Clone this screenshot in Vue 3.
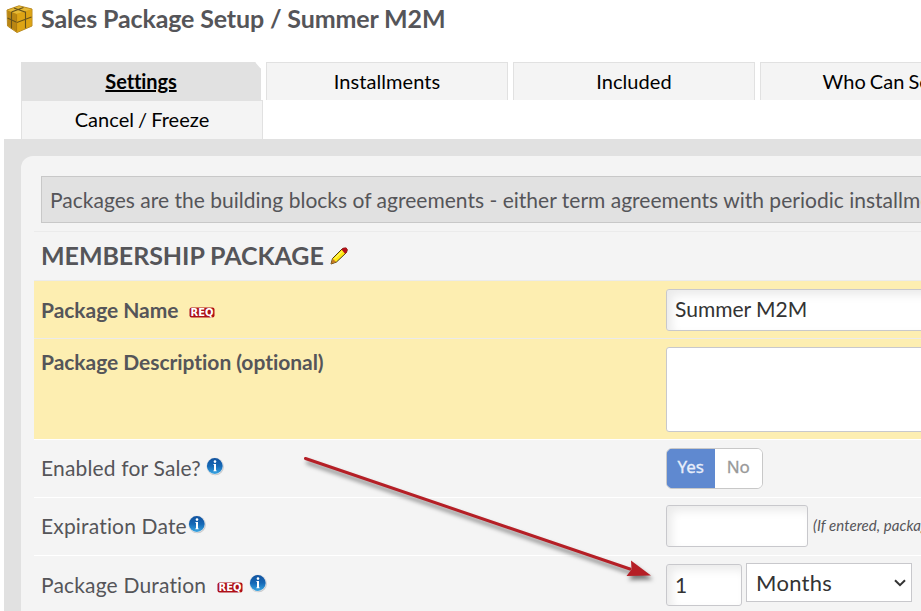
<template>
  <div class="page">
    <header class="title-bar">
      <svg class="package-icon" width="28" height="28" viewBox="0 0 28 28">
        <path d="M1 5 13 .8 26 4v17L11 27.500 1.500 21z" fill="#d5a019" stroke="#b88a26" stroke-linejoin="round" />
        <path d="M1.500 5.500 13 1.300 25.500 4.500 10.500 9z" fill="#e5b936" />
        <path d="M10.500 9 25.500 4.500V20.500L11 27z" fill="#dda414" />
        <path d="M1.500 5.500 10.500 9 11 27 2 20.500z" fill="#b98613" />
        <path d="m5.500 7 12-4.500M8 3l11.500 4.200v16M5.500 7v16.500M1.500 13l9.500 4.500 14.500-5.500" fill="none" stroke="#66521a" stroke-width="1.100" />
        <path d="M10.600 9.500V26" stroke="#a87710" stroke-width=".8" />
      </svg>
      <h1>Sales Package Setup / Summer M2M</h1>
    </header>

    <nav class="tabs">
      <a v-for="tab in tabs" :key="tab" class="tab" :class="{ active: tab === activeTab }" @click="activeTab = tab">
        <span>{{ tab }}</span>
      </a>
    </nav>

    <main class="panel">
      <div class="panel-inner">
        <p class="notice">Packages are the building blocks of agreements - either term agreements with periodic installments</p>

        <div class="section-head">
          <h2>MEMBERSHIP PACKAGE</h2>
          <svg class="pencil" width="18" height="18" viewBox="0 0 18 18">
            <path d="M1 17 2.500 11.500 12.500 1.500 16 1l1.200 1.800-.7 2.700L6.500 15z" fill="#ffe911" stroke="#4c3b13" stroke-width="1" />
            <path d="m11.500 2.500 2-1.700L16.500.7l1 2-.8 2.800-1.700 1.300z" fill="#b4101c" />
            <path d="M1 17 2.600 11.800 6.200 15z" fill="#c47a25" />
            <path d="m5 11.500 7-7" stroke="#fffa9a" stroke-width="1" />
          </svg>
        </div>

        <div v-for="row in rows" :key="row.id" class="row" :class="[row.id, { highlight: row.highlight }]">
          <label class="label">
            <span class="label-text">{{ row.label }}</span>
            <svg v-if="row.required" class="req" width="26" height="11" viewBox="0 0 26 11">
              <rect x=".5" y=".5" width="25" height="10" rx="2" fill="#ad1018" />
              <text x="13" y="9" text-anchor="middle" textLength="23" lengthAdjust="spacingAndGlyphs">REQ</text>
            </svg>
            <svg v-if="row.info" class="info" width="18" height="19" viewBox="0 0 18 19">
              <defs>
                <linearGradient :id="'ball-' + row.id" x1="0" y1="0" x2="0" y2="1">
                  <stop offset="0" stop-color="#12539f" />
                  <stop offset=".5" stop-color="#1568b6" />
                  <stop offset="1" stop-color="#38a5e2" />
                </linearGradient>
              </defs>
              <circle cx="9.300" cy="9.700" r="8.600" fill="#c9c9cb" />
              <circle cx="8.800" cy="9" r="8.500" fill="#e5e7ea" />
              <circle cx="8.800" cy="9" r="7.900" :fill="`url(#ball-${row.id})`" />
              <circle cx="9" cy="4.600" r="1.300" fill="#fff" />
              <path d="M7.300 6.900h2.700v6.500h.7v.9H7.300v-.9h.7V7.800h-.7z" fill="#fff" />
            </svg>
          </label>

          <div class="field">
            <input v-if="row.id === 'name'" v-model="name" class="text-input wide" type="text" />
            <textarea v-else-if="row.id === 'description'" v-model="description" class="area"></textarea>
            <div v-else-if="row.id === 'enabled'" class="toggle">
              <button :class="{ on: enabled }" @click="enabled = true">Yes</button>
              <button :class="{ on: !enabled }" @click="enabled = false">No</button>
            </div>
            <template v-else-if="row.id === 'expiration'">
              <input v-model="expiration" class="text-input date" type="text" />
              <em class="hint">(If entered, package will expire)</em>
            </template>
            <template v-else>
              <input v-model="duration" class="text-input count" type="text" />
              <div class="select">
                <span>{{ unit }}</span>
                <svg width="12" height="8" viewBox="0 0 12 8">
                  <path d="m1 1.200 5 5 5-5" fill="none" stroke="#333" stroke-width="2" />
                </svg>
              </div>
            </template>
          </div>
        </div>
      </div>
    </main>

    <svg class="arrow" width="370" height="150" viewBox="0 0 370 150">
      <g>
        <path d="M15.500 18.500 340 129" stroke="#b51f26" stroke-width="3" stroke-linecap="round" />
        <path d="m361 135.500-24.500.5 5-6.500-.5-9z" fill="#b51f26" />
      </g>
    </svg>
  </div>
</template>

<script setup>
import { ref } from "vue";

const tabs = ["Settings", "Installments", "Included", "Who Can Sell", "Cancel / Freeze"];
const activeTab = ref("Settings");

const rows = [
  { id: "name", label: "Package Name", required: true, highlight: true },
  { id: "description", label: "Package Description (optional)", highlight: true },
  { id: "enabled", label: "Enabled for Sale?", info: true },
  { id: "expiration", label: "Expiration Date", info: true },
  { id: "duration", label: "Package Duration", required: true, info: true },
];

const name = ref("Summer M2M");
const description = ref("");
const enabled = ref(true);
const expiration = ref("");
const duration = ref("1");
const unit = ref("Months");
</script>

<style>
body {
  background-color: #fff;
  overflow: hidden;
}
</style>

<style scoped>
.page {
  position: relative;
  box-sizing: border-box;
  width: 921px;
  height: 611px;
  overflow: hidden;
  font-family: Lato, sans-serif;
  font-size: 21px;
  font-variant-ligatures: none;
  color: #555559;
}
.page * {
  box-sizing: border-box;
}

.title-bar {
  display: flex;
  height: 62px;
  padding: 5px 0 0 6px;
}
.title-bar h1 {
  margin: 0 0 0 7px;
  font-size: 25px;
  font-weight: 700;
  line-height: 27px;
  letter-spacing: -0.14px;
  white-space: nowrap;
}

.tabs {
  display: flex;
  flex-wrap: wrap;
  gap: 0 5px;
  width: 1010px;
  height: 77px;
  padding-left: 21px;
}
.tab {
  width: 242px;
  height: 38px;
  border: 1px solid #e1e1e1;
  border-bottom: none;
  background-color: #f4f4f4;
  color: #000;
  font-size: 20px;
  line-height: 36px;
  letter-spacing: 0.06px;
  word-spacing: -1.2px;
  text-align: center;
  cursor: pointer;
}
.tab:last-child {
  height: 39px;
}
.tab.active {
  width: 240px;
  background-color: #e1e1e1;
  font-weight: 700;
  letter-spacing: -0.1px;
  text-decoration: underline;
  clip-path: polygon(0 0, 234px 0, 240px 7px, 240px 100%, 0 100%);
}

.panel {
  width: 917px;
  height: 472px;
  margin-left: 4px;
  padding: 17px 0 0 17px;
  background-color: #e1e1e1;
}
.panel-inner {
  height: 455px;
  padding: 20px 0 0 13px;
  border-top-left-radius: 12px;
  background-color: #f4f4f4;
}
.notice {
  height: 47px;
  margin: 0 0 8px 7px;
  padding-left: 8px;
  border: 1px solid #c8c8c8;
  border-right: none;
  background-color: #e1e1e1;
  line-height: 45px;
  letter-spacing: 0.015px;
  white-space: nowrap;
  overflow: hidden;
}

.section-head {
  display: flex;
  height: 49px;
  padding-left: 7px;
  border-top: 1px solid #ebebeb;
}
.section-head h2 {
  margin: 0;
  font-size: 25px;
  font-weight: 700;
  line-height: 47px;
  letter-spacing: -0.06px;
}
.pencil {
  margin: 15px 0 0 6px;
}

.row {
  display: flex;
  height: 58px;
  border-top: 1px solid #fff;
}
.row.highlight {
  border-top-color: #ebebeb;
  background-color: #fdeeb1;
}
.row.description {
  height: 101px;
}
.label {
  display: flex;
  width: 632px;
  flex: none;
  padding-left: 7px;
  line-height: 56px;
  letter-spacing: 0.17px;
  white-space: nowrap;
}
.highlight .label {
  font-weight: 700;
  letter-spacing: -0.04px;
}
.name .label {
  line-height: 58px;
}
.description .label {
  line-height: 46px;
}
.duration .label {
  line-height: 58px;
}
.req {
  margin: 26px 0 0 11px;
}
.req text {
  fill: #fff;
  font: 700 10px "DejaVu Sans", sans-serif;
  letter-spacing: 0;
}
.info {
  margin: 17px 0 0 5px;
}
.expiration .info {
  margin-left: 1px;
}
.duration .info {
  margin-left: 6px;
  margin-top: 18px;
}

.field {
  display: flex;
  flex: 1;
  padding-top: 8px;
  white-space: nowrap;
  overflow: hidden;
}
.text-input,
.area {
  height: 42px;
  margin: 0;
  padding: 0 8px;
  border: 1px solid #c8c8cc;
  border-radius: 3px;
  outline: none;
  background-color: #fff;
  color: #333;
  font-family: inherit;
  font-size: 21px;
}
.text-input {
  padding-bottom: 3px;
  box-shadow: inset 5px 5px 10px #ebebeb;
}
.wide {
  width: 400px;
  flex: none;
}
.area {
  width: 400px;
  height: 85px;
  flex: none;
  resize: none;
}
.date {
  width: 142px;
  margin-top: -1px;
}
.count {
  width: 76px;
  padding-bottom: 1px;
}
.hint {
  margin-left: 5px;
  font-size: 15px;
  line-height: 38px;
  letter-spacing: 0.06px;
}

.toggle {
  display: flex;
  width: 97px;
  height: 41px;
  border: 1px solid #c8c8c8;
  border-radius: 6px;
  background-color: #fff;
  overflow: hidden;
}
.toggle button {
  flex: 1;
  padding: 0 0 5px;
  border: none;
  background-color: #fff;
  color: #999;
  font-family: "Noto Sans", sans-serif;
  font-size: 17px;
  -webkit-text-stroke: 0.3px currentColor;
}
.toggle .on {
  background-color: #5f89d0;
  box-shadow: 0 0 0 1px #4f7ac4;
  color: #e8eefa;
}

.select {
  display: flex;
  align-items: center;
  justify-content: space-between;
  width: 166px;
  height: 39px;
  margin: -1px 0 0 4px;
  padding: 0 5px 0 9px;
  border: 1px solid #c8c8cc;
  background-color: #fff;
  color: #333;
  font-size: 22px;
  letter-spacing: 0.3px;
}

/* Callout pointing at the duration field */
.arrow {
  position: absolute;
  top: 440px;
  left: 290px;
  pointer-events: none;
}
.arrow g {
  filter: drop-shadow(2px 4px 2px rgba(0, 0, 0, 0.5));
}
</style>
